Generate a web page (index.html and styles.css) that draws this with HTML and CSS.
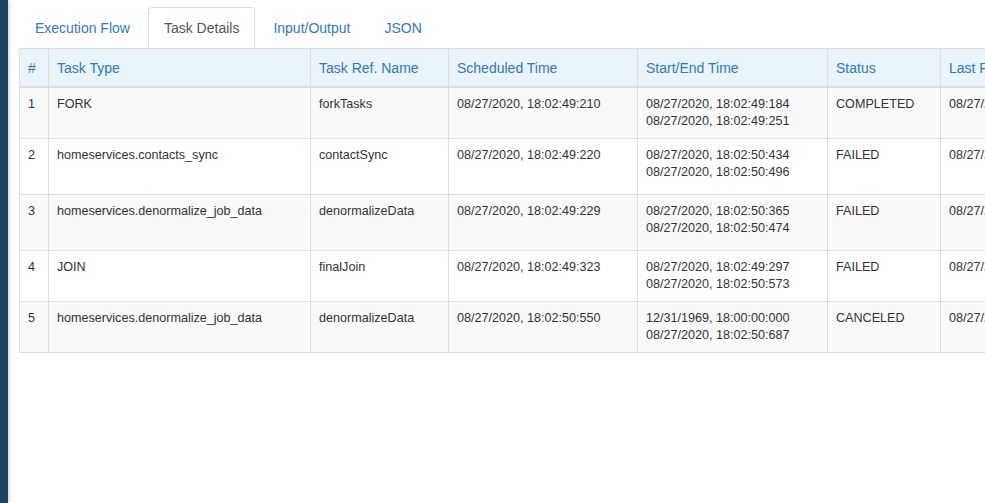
FILE: index.html
```html
<!DOCTYPE html>
<html>
<head>
<meta charset="utf-8">
<link rel="stylesheet" href="styles.css">
</head>
<body>
<div class="app">
  <aside class="sidebar"></aside>
  <main class="content">
    <ul class="tabs">
      <li><a>Execution Flow</a></li>
      <li class="active"><a>Task Details</a></li>
      <li><a>Input/Output</a></li>
      <li><a>JSON</a></li>
    </ul>
    <table class="tasks">
      <thead>
        <tr>
          <th class="c-num">#</th>
          <th class="c-type">Task Type</th>
          <th class="c-ref">Task Ref. Name</th>
          <th class="c-sched">Scheduled Time</th>
          <th class="c-se">Start/End Time</th>
          <th class="c-status">Status</th>
          <th class="c-last">Last Polled</th>
          <th class="c-extra">Callback After</th>
        </tr>
      </thead>
      <tbody>
        <tr>
          <td>1</td><td>FORK</td><td>forkTasks</td><td>08/27/2020, 18:02:49:210</td>
          <td>08/27/2020, 18:02:49:184<br>08/27/2020, 18:02:49:251</td><td>COMPLETED</td><td>08/27/2020, 18:02:49:184</td><td></td>
        </tr>
        <tr class="tall">
          <td>2</td><td>homeservices.contacts_sync</td><td>contactSync</td><td>08/27/2020, 18:02:49:220</td>
          <td>08/27/2020, 18:02:50:434<br>08/27/2020, 18:02:50:496</td><td>FAILED</td><td>08/27/2020, 18:02:50:434</td><td></td>
        </tr>
        <tr class="tall">
          <td>3</td><td>homeservices.denormalize_job_data</td><td>denormalizeData</td><td>08/27/2020, 18:02:49:229</td>
          <td>08/27/2020, 18:02:50:365<br>08/27/2020, 18:02:50:474</td><td>FAILED</td><td>08/27/2020, 18:02:50:365</td><td></td>
        </tr>
        <tr>
          <td>4</td><td>JOIN</td><td>finalJoin</td><td>08/27/2020, 18:02:49:323</td>
          <td>08/27/2020, 18:02:49:297<br>08/27/2020, 18:02:50:573</td><td>FAILED</td><td>08/27/2020, 18:02:49:297</td><td></td>
        </tr>
        <tr>
          <td>5</td><td>homeservices.denormalize_job_data</td><td>denormalizeData</td><td>08/27/2020, 18:02:50:550</td>
          <td>12/31/1969, 18:00:00:000<br>08/27/2020, 18:02:50:687</td><td>CANCELED</td><td>08/27/2020, 18:02:50:550</td><td></td>
        </tr>
      </tbody>
    </table>
  </main>
</div>
</body>
</html>
```
FILE: styles.css
```css
* { box-sizing: border-box; }
html, body {
  margin: 0;
  height: 100%;
  overflow: hidden;
  background: #fff;
}
body {
  font-family: "Liberation Sans", Arial, Helvetica, sans-serif;
  font-size: 14px;
  line-height: 1.42857;
  color: #333;
}
.app {
  display: flex;
  height: 100%;
}
.sidebar {
  flex: 0 0 8px;
  background: #1c4462;
  box-shadow: 1px 0 4px rgba(60, 100, 140, 0.35);
  position: relative;
  z-index: 1;
}
.content {
  flex: 1;
  padding: 7px 0 0 11px;
  min-width: 0;
}
.tabs {
  list-style: none;
  margin: 0;
  padding: 0;
  display: flex;
}
.tabs li {
  margin-right: 2px;
}
.tabs a {
  display: block;
  padding: 10px 15px;
  line-height: 20px;
  color: #337ab7;
  border: 1px solid transparent;
  border-bottom: 0;
  border-radius: 4px 4px 0 0;
  cursor: pointer;
}
.tabs .active a {
  color: #555;
  background: #fff;
  border-color: #ddd;
}
.tasks {
  border-collapse: collapse;
  table-layout: fixed;
  width: 1200px;
  font-size: 12.6px;
  line-height: 17px;
}
.tasks th, .tasks td {
  border: 1px solid #ddd;
  padding: 8px;
  text-align: left;
  vertical-align: top;
  white-space: nowrap;
  overflow: hidden;
}
.tasks th {
  font-size: 14px;
  line-height: 20px;
  padding-top: 9px;
  font-weight: normal;
  color: #337ab7;
  background: #e8f4fa;
  border-bottom: 2px solid #ddd;
  vertical-align: bottom;
}
.tasks tbody tr:nth-child(odd) td {
  background: #f9f9f9;
}
.tasks tbody tr.tall {
  height: 56px;
}
.c-num { width: 29px; }
.c-type { width: 262px; }
.c-ref { width: 138px; }
.c-sched { width: 189px; }
.c-se { width: 190px; }
.c-status { width: 113px; }
.c-last { width: 190px; }
.c-extra { width: 89px; }
```
